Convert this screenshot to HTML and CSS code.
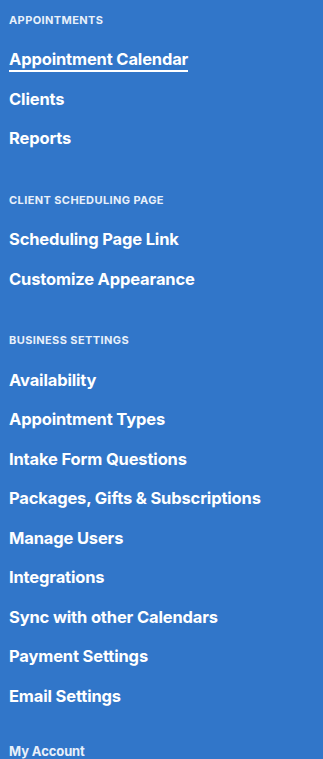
FILE: index.html
```html
<!DOCTYPE html>
<html lang="en">
<head>
<meta charset="utf-8">
<title>Menu</title>
<link rel="stylesheet" href="styles.css">
</head>
<body>
<nav class="nav">
  <section class="section">
    <div class="title">APPOINTMENTS</div>
    <a class="item"><span class="active">Appointment Calendar</span></a>
    <a class="item">Clients</a>
    <a class="item">Reports</a>
  </section>
  <section class="section">
    <div class="title">CLIENT SCHEDULING PAGE</div>
    <a class="item">Scheduling Page Link</a>
    <a class="item">Customize Appearance</a>
  </section>
  <section class="section">
    <div class="title">BUSINESS SETTINGS</div>
    <a class="item">Availability</a>
    <a class="item">Appointment Types</a>
    <a class="item">Intake Form Questions</a>
    <a class="item">Packages, Gifts &amp; Subscriptions</a>
    <a class="item">Manage Users</a>
    <a class="item">Integrations</a>
    <a class="item">Sync with other Calendars</a>
    <a class="item">Payment Settings</a>
    <a class="item">Email Settings</a>
  </section>
  <section class="section last">
    <div class="title account">My Account</div>
  </section>
</nav>
</body>
</html>
```

FILE: styles.css
```css
html, body {
  margin: 0;
  padding: 0;
  background: #3176c9;
}
body {
  font-family: Inter, "Noto Sans", "Liberation Sans", sans-serif;
  color: #ffffff;
  height: 759px;
  overflow: hidden;
}
.nav {
  display: flex;
  flex-direction: column;
  padding: 0 9px;
}
.section {
  display: flex;
  flex-direction: column;
  margin-bottom: 22px;
}
.section.last {
  margin-top: -6px;
}
.title {
  height: 39.5px;
  display: flex;
  align-items: center;
  font-size: 11px;
  font-weight: 700;
  letter-spacing: 0.4px;
  color: #e8f0fa;
}
.title.account {
  font-size: 13px;
  letter-spacing: -0.1px;
}
.item {
  height: 39.5px;
  display: flex;
  align-items: center;
  font-size: 16.5px;
  font-weight: 700;
  letter-spacing: -0.15px;
  color: #ffffff;
}
.active {
  display: inline-block;
  border-bottom: 2px solid #ffffff;
  padding-bottom: 1px;
  margin-top: 3px;
}
```
